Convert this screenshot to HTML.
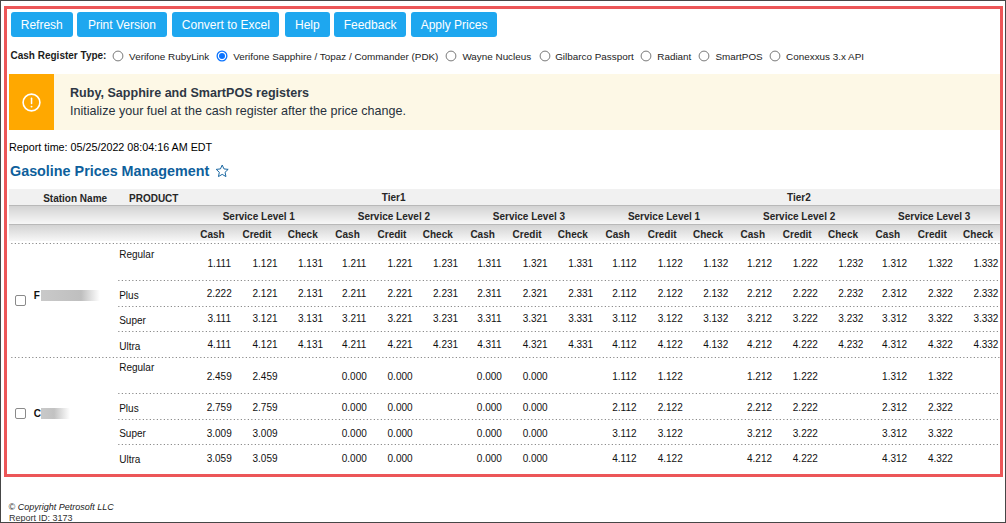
<!DOCTYPE html>
<html><head><meta charset="utf-8"><style>
html,body{margin:0;padding:0;}
body{width:1006px;height:523px;position:relative;overflow:hidden;background:#fff;font-family:"Liberation Sans",sans-serif;}
.t{position:absolute;white-space:nowrap;}
.btn{position:absolute;top:12px;height:24px;padding-top:1px;line-height:25px;background:#1ea7ef;color:#fff;border-radius:3px;font-size:12px;text-align:center;white-space:nowrap;}
.radio{position:absolute;width:9px;height:9px;border:1px solid #858585;border-radius:50%;background:#fff;}
.radio.on{border:1.5px solid #0a75ff;width:8px;height:8px;}
.radio.on i{position:absolute;left:1.25px;top:1.25px;width:5.5px;height:5.5px;border-radius:50%;background:#0a75ff;}
.cb{position:absolute;width:9px;height:9px;border:1px solid #8a8a8a;border-radius:2px;background:#fff;}
.dot{position:absolute;height:1px;background:repeating-linear-gradient(90deg,#8c8c8c 0,#8c8c8c 1px,transparent 1px,transparent 3.5px);}
.frame{position:absolute;left:0;top:0;width:1004px;height:521px;border:1px solid #464646;pointer-events:none;}
.red{position:absolute;left:4px;top:6px;width:993px;height:465px;border:3px solid #ec5658;}
.clip{position:absolute;left:0;top:0;width:1000px;height:523px;overflow:hidden;}
</style></head><body>
<div class="clip">
<div class="btn" style="left:11px;width:61.5px">Refresh</div>
<div class="btn" style="left:77.3px;width:89.3px">Print Version</div>
<div class="btn" style="left:172.2px;width:107.3px">Convert to Excel</div>
<div class="btn" style="left:285.2px;width:44.4px">Help</div>
<div class="btn" style="left:334.4px;width:71.3px">Feedback</div>
<div class="btn" style="left:411.4px;width:85.3px">Apply Prices</div>
<div class="t" style="left:10.50px;top:50.43px;font-size:10px;line-height:12px;font-weight:700;color:#1c1c1c;">Cash Register Type:</div>
<svg style="position:absolute;left:111.45px;top:49.30px" width="14" height="14"><circle cx="7" cy="7" r="4.9" fill="none" stroke="#7a7a7a" stroke-width="1"/></svg>
<div class="t" style="left:129.10px;top:51.17px;font-size:9.9px;line-height:12px;font-weight:400;color:#222;">Verifone RubyLink</div>
<svg style="position:absolute;left:215.35px;top:49.30px" width="14" height="14"><circle cx="7" cy="7" r="4.85" fill="none" stroke="#0b74ff" stroke-width="1.3"/><circle cx="7" cy="7" r="3.0" fill="#0b74ff"/></svg>
<div class="t" style="left:233.30px;top:51.17px;font-size:9.9px;line-height:12px;font-weight:400;color:#222;">Verifone Sapphire / Topaz / Commander (PDK)</div>
<svg style="position:absolute;left:444.15px;top:49.30px" width="14" height="14"><circle cx="7" cy="7" r="4.9" fill="none" stroke="#7a7a7a" stroke-width="1"/></svg>
<div class="t" style="left:462.40px;top:51.17px;font-size:9.9px;line-height:12px;font-weight:400;color:#222;">Wayne Nucleus</div>
<svg style="position:absolute;left:537.95px;top:49.30px" width="14" height="14"><circle cx="7" cy="7" r="4.9" fill="none" stroke="#7a7a7a" stroke-width="1"/></svg>
<div class="t" style="left:555.20px;top:51.17px;font-size:9.9px;line-height:12px;font-weight:400;color:#222;">Gilbarco Passport</div>
<svg style="position:absolute;left:639.45px;top:49.30px" width="14" height="14"><circle cx="7" cy="7" r="4.9" fill="none" stroke="#7a7a7a" stroke-width="1"/></svg>
<div class="t" style="left:657.30px;top:51.17px;font-size:9.9px;line-height:12px;font-weight:400;color:#222;">Radiant</div>
<svg style="position:absolute;left:697.35px;top:49.30px" width="14" height="14"><circle cx="7" cy="7" r="4.9" fill="none" stroke="#7a7a7a" stroke-width="1"/></svg>
<div class="t" style="left:715.50px;top:51.17px;font-size:9.9px;line-height:12px;font-weight:400;color:#222;">SmartPOS</div>
<svg style="position:absolute;left:768.35px;top:49.30px" width="14" height="14"><circle cx="7" cy="7" r="4.9" fill="none" stroke="#7a7a7a" stroke-width="1"/></svg>
<div class="t" style="left:786.10px;top:51.17px;font-size:9.9px;line-height:12px;font-weight:400;color:#222;">Conexxus 3.x API</div>
<div style="position:absolute;left:9px;top:74px;width:991px;height:56px;background:#fdf8e6;"></div>
<div style="position:absolute;left:9px;top:74px;width:45px;height:56px;background:#ffa800;"></div>
<svg style="position:absolute;left:22px;top:92.5px" width="19" height="19" viewBox="0 0 19 19"><circle cx="9.5" cy="9.5" r="8.4" fill="none" stroke="#fff" stroke-width="1.6"/><rect x="8.8" y="4.6" width="1.5" height="6.6" rx="0.6" fill="#fff"/><circle cx="9.55" cy="13.6" r="0.95" fill="#fff"/></svg>
<div class="t" style="left:70.20px;top:84.52px;font-size:13.5px;line-height:16px;font-weight:700;color:#2e3744;transform:scaleX(0.93);transform-origin:0 0;">Ruby, Sapphire and SmartPOS registers</div>
<div class="t" style="left:70.20px;top:102.82px;font-size:13.5px;line-height:16px;font-weight:400;color:#27313d;transform:scaleX(0.931);transform-origin:0 0;">Initialize your fuel at the cash register after the price change.</div>
<div class="t" style="left:9.00px;top:140.77px;font-size:10.75px;line-height:13px;font-weight:400;color:#000;">Report time: 05/25/2022 08:04:16 AM EDT</div>
<div class="t" style="left:10.00px;top:162.52px;font-size:14.35px;line-height:17px;font-weight:700;color:#0e5f9c;">Gasoline Prices Management</div>
<svg style="position:absolute;left:214.5px;top:163.5px" width="14" height="14" viewBox="0 0 14 14"><path d="M7.20 1.05 L8.97 4.91 L13.17 5.38 L10.07 8.28 L10.94 12.57 L7.20 10.37 L3.46 12.57 L4.33 8.28 L1.23 5.38 L5.43 4.91 Z" fill="none" stroke="#0e5f9c" stroke-width="0.95" stroke-linejoin="round"/></svg>
<div style="position:absolute;left:9px;top:189px;width:991px;height:16px;background:#f1f1f1;"></div>
<div style="position:absolute;left:9px;top:205px;width:991px;height:1px;background:#b9b9b9;"></div>
<div style="position:absolute;left:9px;top:206px;width:991px;height:18px;background:linear-gradient(#d3d3d3,#f7f7f7);"></div>
<div style="position:absolute;left:9px;top:224px;width:991px;height:1px;background:#b9b9b9;"></div>
<div style="position:absolute;left:9px;top:225px;width:991px;height:16px;background:linear-gradient(#d3d3d3,#f7f7f7);"></div>
<div class="t" style="left:43.20px;top:192.73px;font-size:10px;line-height:12px;font-weight:700;color:#262626;">Station Name</div>
<div class="t" style="left:129.00px;top:192.73px;font-size:10px;line-height:12px;font-weight:700;color:#262626;">PRODUCT</div>
<div class="t" style="left:353.60px;width:80px;text-align:center;top:192.43px;font-size:10px;line-height:12px;font-weight:700;color:#262626;">Tier1</div>
<div class="t" style="left:758.90px;width:80px;text-align:center;top:192.43px;font-size:10px;line-height:12px;font-weight:700;color:#262626;">Tier2</div>
<div class="t" style="left:198.80px;width:120px;text-align:center;top:210.83px;font-size:10px;line-height:12px;font-weight:700;color:#262626;">Service Level 1</div>
<div class="t" style="left:182.45px;width:60px;text-align:center;top:229.33px;font-size:10px;line-height:12px;font-weight:700;color:#262626;">Cash</div>
<div class="t" style="left:226.90px;width:60px;text-align:center;top:229.33px;font-size:10px;line-height:12px;font-weight:700;color:#262626;">Credit</div>
<div class="t" style="left:272.70px;width:60px;text-align:center;top:229.33px;font-size:10px;line-height:12px;font-weight:700;color:#262626;">Check</div>
<div class="t" style="left:333.88px;width:120px;text-align:center;top:210.83px;font-size:10px;line-height:12px;font-weight:700;color:#262626;">Service Level 2</div>
<div class="t" style="left:317.53px;width:60px;text-align:center;top:229.33px;font-size:10px;line-height:12px;font-weight:700;color:#262626;">Cash</div>
<div class="t" style="left:361.98px;width:60px;text-align:center;top:229.33px;font-size:10px;line-height:12px;font-weight:700;color:#262626;">Credit</div>
<div class="t" style="left:407.78px;width:60px;text-align:center;top:229.33px;font-size:10px;line-height:12px;font-weight:700;color:#262626;">Check</div>
<div class="t" style="left:468.96px;width:120px;text-align:center;top:210.83px;font-size:10px;line-height:12px;font-weight:700;color:#262626;">Service Level 3</div>
<div class="t" style="left:452.61px;width:60px;text-align:center;top:229.33px;font-size:10px;line-height:12px;font-weight:700;color:#262626;">Cash</div>
<div class="t" style="left:497.06px;width:60px;text-align:center;top:229.33px;font-size:10px;line-height:12px;font-weight:700;color:#262626;">Credit</div>
<div class="t" style="left:542.86px;width:60px;text-align:center;top:229.33px;font-size:10px;line-height:12px;font-weight:700;color:#262626;">Check</div>
<div class="t" style="left:604.04px;width:120px;text-align:center;top:210.83px;font-size:10px;line-height:12px;font-weight:700;color:#262626;">Service Level 1</div>
<div class="t" style="left:587.69px;width:60px;text-align:center;top:229.33px;font-size:10px;line-height:12px;font-weight:700;color:#262626;">Cash</div>
<div class="t" style="left:632.14px;width:60px;text-align:center;top:229.33px;font-size:10px;line-height:12px;font-weight:700;color:#262626;">Credit</div>
<div class="t" style="left:677.94px;width:60px;text-align:center;top:229.33px;font-size:10px;line-height:12px;font-weight:700;color:#262626;">Check</div>
<div class="t" style="left:739.12px;width:120px;text-align:center;top:210.83px;font-size:10px;line-height:12px;font-weight:700;color:#262626;">Service Level 2</div>
<div class="t" style="left:722.77px;width:60px;text-align:center;top:229.33px;font-size:10px;line-height:12px;font-weight:700;color:#262626;">Cash</div>
<div class="t" style="left:767.22px;width:60px;text-align:center;top:229.33px;font-size:10px;line-height:12px;font-weight:700;color:#262626;">Credit</div>
<div class="t" style="left:813.02px;width:60px;text-align:center;top:229.33px;font-size:10px;line-height:12px;font-weight:700;color:#262626;">Check</div>
<div class="t" style="left:874.20px;width:120px;text-align:center;top:210.83px;font-size:10px;line-height:12px;font-weight:700;color:#262626;">Service Level 3</div>
<div class="t" style="left:857.85px;width:60px;text-align:center;top:229.33px;font-size:10px;line-height:12px;font-weight:700;color:#262626;">Cash</div>
<div class="t" style="left:902.30px;width:60px;text-align:center;top:229.33px;font-size:10px;line-height:12px;font-weight:700;color:#262626;">Credit</div>
<div class="t" style="left:948.10px;width:60px;text-align:center;top:229.33px;font-size:10px;line-height:12px;font-weight:700;color:#262626;">Check</div>
<svg style="position:absolute;left:11px;top:243px" width="989" height="1"><line x1="0.3" y1="0.5" x2="989" y2="0.5" stroke="#7d7d7d" stroke-width="1" stroke-dasharray="1.1 2.4"/></svg>
<svg style="position:absolute;left:11px;top:357px" width="989" height="1"><line x1="0.3" y1="0.5" x2="989" y2="0.5" stroke="#7d7d7d" stroke-width="1" stroke-dasharray="1.1 2.4"/></svg>
<svg style="position:absolute;left:118px;top:280px" width="882" height="1"><line x1="0.3" y1="0.5" x2="882" y2="0.5" stroke="#7d7d7d" stroke-width="1" stroke-dasharray="1.1 2.4"/></svg>
<svg style="position:absolute;left:118px;top:306px" width="882" height="1"><line x1="0.3" y1="0.5" x2="882" y2="0.5" stroke="#7d7d7d" stroke-width="1" stroke-dasharray="1.1 2.4"/></svg>
<svg style="position:absolute;left:118px;top:331px" width="882" height="1"><line x1="0.3" y1="0.5" x2="882" y2="0.5" stroke="#7d7d7d" stroke-width="1" stroke-dasharray="1.1 2.4"/></svg>
<svg style="position:absolute;left:118px;top:393px" width="882" height="1"><line x1="0.3" y1="0.5" x2="882" y2="0.5" stroke="#7d7d7d" stroke-width="1" stroke-dasharray="1.1 2.4"/></svg>
<svg style="position:absolute;left:118px;top:419px" width="882" height="1"><line x1="0.3" y1="0.5" x2="882" y2="0.5" stroke="#7d7d7d" stroke-width="1" stroke-dasharray="1.1 2.4"/></svg>
<svg style="position:absolute;left:118px;top:444px" width="882" height="1"><line x1="0.3" y1="0.5" x2="882" y2="0.5" stroke="#7d7d7d" stroke-width="1" stroke-dasharray="1.1 2.4"/></svg>
<div class="cb" style="left:15px;top:295px"></div>
<div class="cb" style="left:15px;top:408px"></div>
<div class="t" style="left:33.80px;top:290.43px;font-size:10px;line-height:12px;font-weight:700;color:#111;">F</div>
<div class="t" style="left:33.80px;top:408.43px;font-size:10px;line-height:12px;font-weight:700;color:#111;">C</div>
<div style="position:absolute;left:41px;top:290px;width:59px;height:11px;background:linear-gradient(90deg,#c9c9c9 0%,#bfbfbf 68%,rgba(255,255,255,0) 100%);"></div>
<div style="position:absolute;left:41px;top:408px;width:29px;height:11px;background:linear-gradient(90deg,#c9c9c9 0%,#c2c2c2 45%,rgba(255,255,255,0) 100%);"></div>
<div class="t" style="left:119.20px;top:248.83px;font-size:10px;line-height:12px;font-weight:400;color:#111;">Regular</div>
<div class="t" style="left:189.20px;width:60px;text-align:center;top:257.53px;font-size:10px;line-height:12px;font-weight:400;color:#111;">1.111</div>
<div class="t" style="left:235.00px;width:60px;text-align:center;top:257.53px;font-size:10px;line-height:12px;font-weight:400;color:#111;">1.121</div>
<div class="t" style="left:280.50px;width:60px;text-align:center;top:257.53px;font-size:10px;line-height:12px;font-weight:400;color:#111;">1.131</div>
<div class="t" style="left:324.28px;width:60px;text-align:center;top:257.53px;font-size:10px;line-height:12px;font-weight:400;color:#111;">1.211</div>
<div class="t" style="left:370.08px;width:60px;text-align:center;top:257.53px;font-size:10px;line-height:12px;font-weight:400;color:#111;">1.221</div>
<div class="t" style="left:415.58px;width:60px;text-align:center;top:257.53px;font-size:10px;line-height:12px;font-weight:400;color:#111;">1.231</div>
<div class="t" style="left:459.36px;width:60px;text-align:center;top:257.53px;font-size:10px;line-height:12px;font-weight:400;color:#111;">1.311</div>
<div class="t" style="left:505.16px;width:60px;text-align:center;top:257.53px;font-size:10px;line-height:12px;font-weight:400;color:#111;">1.321</div>
<div class="t" style="left:550.66px;width:60px;text-align:center;top:257.53px;font-size:10px;line-height:12px;font-weight:400;color:#111;">1.331</div>
<div class="t" style="left:594.44px;width:60px;text-align:center;top:257.53px;font-size:10px;line-height:12px;font-weight:400;color:#111;">1.112</div>
<div class="t" style="left:640.24px;width:60px;text-align:center;top:257.53px;font-size:10px;line-height:12px;font-weight:400;color:#111;">1.122</div>
<div class="t" style="left:685.74px;width:60px;text-align:center;top:257.53px;font-size:10px;line-height:12px;font-weight:400;color:#111;">1.132</div>
<div class="t" style="left:729.52px;width:60px;text-align:center;top:257.53px;font-size:10px;line-height:12px;font-weight:400;color:#111;">1.212</div>
<div class="t" style="left:775.32px;width:60px;text-align:center;top:257.53px;font-size:10px;line-height:12px;font-weight:400;color:#111;">1.222</div>
<div class="t" style="left:820.82px;width:60px;text-align:center;top:257.53px;font-size:10px;line-height:12px;font-weight:400;color:#111;">1.232</div>
<div class="t" style="left:864.60px;width:60px;text-align:center;top:257.53px;font-size:10px;line-height:12px;font-weight:400;color:#111;">1.312</div>
<div class="t" style="left:910.40px;width:60px;text-align:center;top:257.53px;font-size:10px;line-height:12px;font-weight:400;color:#111;">1.322</div>
<div class="t" style="left:955.90px;width:60px;text-align:center;top:257.53px;font-size:10px;line-height:12px;font-weight:400;color:#111;">1.332</div>
<div class="t" style="left:119.20px;top:290.33px;font-size:10px;line-height:12px;font-weight:400;color:#111;">Plus</div>
<div class="t" style="left:189.20px;width:60px;text-align:center;top:288.43px;font-size:10px;line-height:12px;font-weight:400;color:#111;">2.222</div>
<div class="t" style="left:235.00px;width:60px;text-align:center;top:288.43px;font-size:10px;line-height:12px;font-weight:400;color:#111;">2.121</div>
<div class="t" style="left:280.50px;width:60px;text-align:center;top:288.43px;font-size:10px;line-height:12px;font-weight:400;color:#111;">2.131</div>
<div class="t" style="left:324.28px;width:60px;text-align:center;top:288.43px;font-size:10px;line-height:12px;font-weight:400;color:#111;">2.211</div>
<div class="t" style="left:370.08px;width:60px;text-align:center;top:288.43px;font-size:10px;line-height:12px;font-weight:400;color:#111;">2.221</div>
<div class="t" style="left:415.58px;width:60px;text-align:center;top:288.43px;font-size:10px;line-height:12px;font-weight:400;color:#111;">2.231</div>
<div class="t" style="left:459.36px;width:60px;text-align:center;top:288.43px;font-size:10px;line-height:12px;font-weight:400;color:#111;">2.311</div>
<div class="t" style="left:505.16px;width:60px;text-align:center;top:288.43px;font-size:10px;line-height:12px;font-weight:400;color:#111;">2.321</div>
<div class="t" style="left:550.66px;width:60px;text-align:center;top:288.43px;font-size:10px;line-height:12px;font-weight:400;color:#111;">2.331</div>
<div class="t" style="left:594.44px;width:60px;text-align:center;top:288.43px;font-size:10px;line-height:12px;font-weight:400;color:#111;">2.112</div>
<div class="t" style="left:640.24px;width:60px;text-align:center;top:288.43px;font-size:10px;line-height:12px;font-weight:400;color:#111;">2.122</div>
<div class="t" style="left:685.74px;width:60px;text-align:center;top:288.43px;font-size:10px;line-height:12px;font-weight:400;color:#111;">2.132</div>
<div class="t" style="left:729.52px;width:60px;text-align:center;top:288.43px;font-size:10px;line-height:12px;font-weight:400;color:#111;">2.212</div>
<div class="t" style="left:775.32px;width:60px;text-align:center;top:288.43px;font-size:10px;line-height:12px;font-weight:400;color:#111;">2.222</div>
<div class="t" style="left:820.82px;width:60px;text-align:center;top:288.43px;font-size:10px;line-height:12px;font-weight:400;color:#111;">2.232</div>
<div class="t" style="left:864.60px;width:60px;text-align:center;top:288.43px;font-size:10px;line-height:12px;font-weight:400;color:#111;">2.312</div>
<div class="t" style="left:910.40px;width:60px;text-align:center;top:288.43px;font-size:10px;line-height:12px;font-weight:400;color:#111;">2.322</div>
<div class="t" style="left:955.90px;width:60px;text-align:center;top:288.43px;font-size:10px;line-height:12px;font-weight:400;color:#111;">2.332</div>
<div class="t" style="left:119.20px;top:315.23px;font-size:10px;line-height:12px;font-weight:400;color:#111;">Super</div>
<div class="t" style="left:189.20px;width:60px;text-align:center;top:313.33px;font-size:10px;line-height:12px;font-weight:400;color:#111;">3.111</div>
<div class="t" style="left:235.00px;width:60px;text-align:center;top:313.33px;font-size:10px;line-height:12px;font-weight:400;color:#111;">3.121</div>
<div class="t" style="left:280.50px;width:60px;text-align:center;top:313.33px;font-size:10px;line-height:12px;font-weight:400;color:#111;">3.131</div>
<div class="t" style="left:324.28px;width:60px;text-align:center;top:313.33px;font-size:10px;line-height:12px;font-weight:400;color:#111;">3.211</div>
<div class="t" style="left:370.08px;width:60px;text-align:center;top:313.33px;font-size:10px;line-height:12px;font-weight:400;color:#111;">3.221</div>
<div class="t" style="left:415.58px;width:60px;text-align:center;top:313.33px;font-size:10px;line-height:12px;font-weight:400;color:#111;">3.231</div>
<div class="t" style="left:459.36px;width:60px;text-align:center;top:313.33px;font-size:10px;line-height:12px;font-weight:400;color:#111;">3.311</div>
<div class="t" style="left:505.16px;width:60px;text-align:center;top:313.33px;font-size:10px;line-height:12px;font-weight:400;color:#111;">3.321</div>
<div class="t" style="left:550.66px;width:60px;text-align:center;top:313.33px;font-size:10px;line-height:12px;font-weight:400;color:#111;">3.331</div>
<div class="t" style="left:594.44px;width:60px;text-align:center;top:313.33px;font-size:10px;line-height:12px;font-weight:400;color:#111;">3.112</div>
<div class="t" style="left:640.24px;width:60px;text-align:center;top:313.33px;font-size:10px;line-height:12px;font-weight:400;color:#111;">3.122</div>
<div class="t" style="left:685.74px;width:60px;text-align:center;top:313.33px;font-size:10px;line-height:12px;font-weight:400;color:#111;">3.132</div>
<div class="t" style="left:729.52px;width:60px;text-align:center;top:313.33px;font-size:10px;line-height:12px;font-weight:400;color:#111;">3.212</div>
<div class="t" style="left:775.32px;width:60px;text-align:center;top:313.33px;font-size:10px;line-height:12px;font-weight:400;color:#111;">3.222</div>
<div class="t" style="left:820.82px;width:60px;text-align:center;top:313.33px;font-size:10px;line-height:12px;font-weight:400;color:#111;">3.232</div>
<div class="t" style="left:864.60px;width:60px;text-align:center;top:313.33px;font-size:10px;line-height:12px;font-weight:400;color:#111;">3.312</div>
<div class="t" style="left:910.40px;width:60px;text-align:center;top:313.33px;font-size:10px;line-height:12px;font-weight:400;color:#111;">3.322</div>
<div class="t" style="left:955.90px;width:60px;text-align:center;top:313.33px;font-size:10px;line-height:12px;font-weight:400;color:#111;">3.332</div>
<div class="t" style="left:119.20px;top:340.83px;font-size:10px;line-height:12px;font-weight:400;color:#111;">Ultra</div>
<div class="t" style="left:189.20px;width:60px;text-align:center;top:339.33px;font-size:10px;line-height:12px;font-weight:400;color:#111;">4.111</div>
<div class="t" style="left:235.00px;width:60px;text-align:center;top:339.33px;font-size:10px;line-height:12px;font-weight:400;color:#111;">4.121</div>
<div class="t" style="left:280.50px;width:60px;text-align:center;top:339.33px;font-size:10px;line-height:12px;font-weight:400;color:#111;">4.131</div>
<div class="t" style="left:324.28px;width:60px;text-align:center;top:339.33px;font-size:10px;line-height:12px;font-weight:400;color:#111;">4.211</div>
<div class="t" style="left:370.08px;width:60px;text-align:center;top:339.33px;font-size:10px;line-height:12px;font-weight:400;color:#111;">4.221</div>
<div class="t" style="left:415.58px;width:60px;text-align:center;top:339.33px;font-size:10px;line-height:12px;font-weight:400;color:#111;">4.231</div>
<div class="t" style="left:459.36px;width:60px;text-align:center;top:339.33px;font-size:10px;line-height:12px;font-weight:400;color:#111;">4.311</div>
<div class="t" style="left:505.16px;width:60px;text-align:center;top:339.33px;font-size:10px;line-height:12px;font-weight:400;color:#111;">4.321</div>
<div class="t" style="left:550.66px;width:60px;text-align:center;top:339.33px;font-size:10px;line-height:12px;font-weight:400;color:#111;">4.331</div>
<div class="t" style="left:594.44px;width:60px;text-align:center;top:339.33px;font-size:10px;line-height:12px;font-weight:400;color:#111;">4.112</div>
<div class="t" style="left:640.24px;width:60px;text-align:center;top:339.33px;font-size:10px;line-height:12px;font-weight:400;color:#111;">4.122</div>
<div class="t" style="left:685.74px;width:60px;text-align:center;top:339.33px;font-size:10px;line-height:12px;font-weight:400;color:#111;">4.132</div>
<div class="t" style="left:729.52px;width:60px;text-align:center;top:339.33px;font-size:10px;line-height:12px;font-weight:400;color:#111;">4.212</div>
<div class="t" style="left:775.32px;width:60px;text-align:center;top:339.33px;font-size:10px;line-height:12px;font-weight:400;color:#111;">4.222</div>
<div class="t" style="left:820.82px;width:60px;text-align:center;top:339.33px;font-size:10px;line-height:12px;font-weight:400;color:#111;">4.232</div>
<div class="t" style="left:864.60px;width:60px;text-align:center;top:339.33px;font-size:10px;line-height:12px;font-weight:400;color:#111;">4.312</div>
<div class="t" style="left:910.40px;width:60px;text-align:center;top:339.33px;font-size:10px;line-height:12px;font-weight:400;color:#111;">4.322</div>
<div class="t" style="left:955.90px;width:60px;text-align:center;top:339.33px;font-size:10px;line-height:12px;font-weight:400;color:#111;">4.332</div>
<div class="t" style="left:119.20px;top:361.83px;font-size:10px;line-height:12px;font-weight:400;color:#111;">Regular</div>
<div class="t" style="left:189.20px;width:60px;text-align:center;top:370.63px;font-size:10px;line-height:12px;font-weight:400;color:#111;">2.459</div>
<div class="t" style="left:235.00px;width:60px;text-align:center;top:370.63px;font-size:10px;line-height:12px;font-weight:400;color:#111;">2.459</div>
<div class="t" style="left:324.28px;width:60px;text-align:center;top:370.63px;font-size:10px;line-height:12px;font-weight:400;color:#111;">0.000</div>
<div class="t" style="left:370.08px;width:60px;text-align:center;top:370.63px;font-size:10px;line-height:12px;font-weight:400;color:#111;">0.000</div>
<div class="t" style="left:459.36px;width:60px;text-align:center;top:370.63px;font-size:10px;line-height:12px;font-weight:400;color:#111;">0.000</div>
<div class="t" style="left:505.16px;width:60px;text-align:center;top:370.63px;font-size:10px;line-height:12px;font-weight:400;color:#111;">0.000</div>
<div class="t" style="left:594.44px;width:60px;text-align:center;top:370.63px;font-size:10px;line-height:12px;font-weight:400;color:#111;">1.112</div>
<div class="t" style="left:640.24px;width:60px;text-align:center;top:370.63px;font-size:10px;line-height:12px;font-weight:400;color:#111;">1.122</div>
<div class="t" style="left:729.52px;width:60px;text-align:center;top:370.63px;font-size:10px;line-height:12px;font-weight:400;color:#111;">1.212</div>
<div class="t" style="left:775.32px;width:60px;text-align:center;top:370.63px;font-size:10px;line-height:12px;font-weight:400;color:#111;">1.222</div>
<div class="t" style="left:864.60px;width:60px;text-align:center;top:370.63px;font-size:10px;line-height:12px;font-weight:400;color:#111;">1.312</div>
<div class="t" style="left:910.40px;width:60px;text-align:center;top:370.63px;font-size:10px;line-height:12px;font-weight:400;color:#111;">1.322</div>
<div class="t" style="left:119.20px;top:403.13px;font-size:10px;line-height:12px;font-weight:400;color:#111;">Plus</div>
<div class="t" style="left:189.20px;width:60px;text-align:center;top:401.73px;font-size:10px;line-height:12px;font-weight:400;color:#111;">2.759</div>
<div class="t" style="left:235.00px;width:60px;text-align:center;top:401.73px;font-size:10px;line-height:12px;font-weight:400;color:#111;">2.759</div>
<div class="t" style="left:324.28px;width:60px;text-align:center;top:401.73px;font-size:10px;line-height:12px;font-weight:400;color:#111;">0.000</div>
<div class="t" style="left:370.08px;width:60px;text-align:center;top:401.73px;font-size:10px;line-height:12px;font-weight:400;color:#111;">0.000</div>
<div class="t" style="left:459.36px;width:60px;text-align:center;top:401.73px;font-size:10px;line-height:12px;font-weight:400;color:#111;">0.000</div>
<div class="t" style="left:505.16px;width:60px;text-align:center;top:401.73px;font-size:10px;line-height:12px;font-weight:400;color:#111;">0.000</div>
<div class="t" style="left:594.44px;width:60px;text-align:center;top:401.73px;font-size:10px;line-height:12px;font-weight:400;color:#111;">2.112</div>
<div class="t" style="left:640.24px;width:60px;text-align:center;top:401.73px;font-size:10px;line-height:12px;font-weight:400;color:#111;">2.122</div>
<div class="t" style="left:729.52px;width:60px;text-align:center;top:401.73px;font-size:10px;line-height:12px;font-weight:400;color:#111;">2.212</div>
<div class="t" style="left:775.32px;width:60px;text-align:center;top:401.73px;font-size:10px;line-height:12px;font-weight:400;color:#111;">2.222</div>
<div class="t" style="left:864.60px;width:60px;text-align:center;top:401.73px;font-size:10px;line-height:12px;font-weight:400;color:#111;">2.312</div>
<div class="t" style="left:910.40px;width:60px;text-align:center;top:401.73px;font-size:10px;line-height:12px;font-weight:400;color:#111;">2.322</div>
<div class="t" style="left:119.20px;top:428.03px;font-size:10px;line-height:12px;font-weight:400;color:#111;">Super</div>
<div class="t" style="left:189.20px;width:60px;text-align:center;top:427.53px;font-size:10px;line-height:12px;font-weight:400;color:#111;">3.009</div>
<div class="t" style="left:235.00px;width:60px;text-align:center;top:427.53px;font-size:10px;line-height:12px;font-weight:400;color:#111;">3.009</div>
<div class="t" style="left:324.28px;width:60px;text-align:center;top:427.53px;font-size:10px;line-height:12px;font-weight:400;color:#111;">0.000</div>
<div class="t" style="left:370.08px;width:60px;text-align:center;top:427.53px;font-size:10px;line-height:12px;font-weight:400;color:#111;">0.000</div>
<div class="t" style="left:459.36px;width:60px;text-align:center;top:427.53px;font-size:10px;line-height:12px;font-weight:400;color:#111;">0.000</div>
<div class="t" style="left:505.16px;width:60px;text-align:center;top:427.53px;font-size:10px;line-height:12px;font-weight:400;color:#111;">0.000</div>
<div class="t" style="left:594.44px;width:60px;text-align:center;top:427.53px;font-size:10px;line-height:12px;font-weight:400;color:#111;">3.112</div>
<div class="t" style="left:640.24px;width:60px;text-align:center;top:427.53px;font-size:10px;line-height:12px;font-weight:400;color:#111;">3.122</div>
<div class="t" style="left:729.52px;width:60px;text-align:center;top:427.53px;font-size:10px;line-height:12px;font-weight:400;color:#111;">3.212</div>
<div class="t" style="left:775.32px;width:60px;text-align:center;top:427.53px;font-size:10px;line-height:12px;font-weight:400;color:#111;">3.222</div>
<div class="t" style="left:864.60px;width:60px;text-align:center;top:427.53px;font-size:10px;line-height:12px;font-weight:400;color:#111;">3.312</div>
<div class="t" style="left:910.40px;width:60px;text-align:center;top:427.53px;font-size:10px;line-height:12px;font-weight:400;color:#111;">3.322</div>
<div class="t" style="left:119.20px;top:454.23px;font-size:10px;line-height:12px;font-weight:400;color:#111;">Ultra</div>
<div class="t" style="left:189.20px;width:60px;text-align:center;top:452.53px;font-size:10px;line-height:12px;font-weight:400;color:#111;">3.059</div>
<div class="t" style="left:235.00px;width:60px;text-align:center;top:452.53px;font-size:10px;line-height:12px;font-weight:400;color:#111;">3.059</div>
<div class="t" style="left:324.28px;width:60px;text-align:center;top:452.53px;font-size:10px;line-height:12px;font-weight:400;color:#111;">0.000</div>
<div class="t" style="left:370.08px;width:60px;text-align:center;top:452.53px;font-size:10px;line-height:12px;font-weight:400;color:#111;">0.000</div>
<div class="t" style="left:459.36px;width:60px;text-align:center;top:452.53px;font-size:10px;line-height:12px;font-weight:400;color:#111;">0.000</div>
<div class="t" style="left:505.16px;width:60px;text-align:center;top:452.53px;font-size:10px;line-height:12px;font-weight:400;color:#111;">0.000</div>
<div class="t" style="left:594.44px;width:60px;text-align:center;top:452.53px;font-size:10px;line-height:12px;font-weight:400;color:#111;">4.112</div>
<div class="t" style="left:640.24px;width:60px;text-align:center;top:452.53px;font-size:10px;line-height:12px;font-weight:400;color:#111;">4.122</div>
<div class="t" style="left:729.52px;width:60px;text-align:center;top:452.53px;font-size:10px;line-height:12px;font-weight:400;color:#111;">4.212</div>
<div class="t" style="left:775.32px;width:60px;text-align:center;top:452.53px;font-size:10px;line-height:12px;font-weight:400;color:#111;">4.222</div>
<div class="t" style="left:864.60px;width:60px;text-align:center;top:452.53px;font-size:10px;line-height:12px;font-weight:400;color:#111;">4.312</div>
<div class="t" style="left:910.40px;width:60px;text-align:center;top:452.53px;font-size:10px;line-height:12px;font-weight:400;color:#111;">4.322</div>
<div class="t" style="left:8.50px;top:502.28px;font-size:9px;line-height:11px;font-weight:400;color:#222;font-style:italic;">&copy; Copyright Petrosoft LLC</div>
<div class="t" style="left:9.00px;top:512.88px;font-size:9px;line-height:11px;font-weight:400;color:#333;">Report ID: 3173</div>
</div>
<div class="red"></div>
<div class="frame"></div>
</body></html>
